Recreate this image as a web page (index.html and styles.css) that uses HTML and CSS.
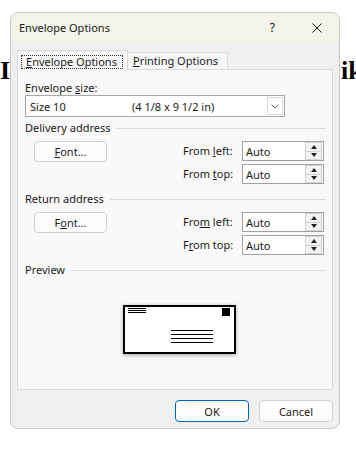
FILE: index.html
```html
<!DOCTYPE html>
<html lang="en">
<head>
    <meta charset="UTF-8">
    <meta name="viewport" content="width=device-width, initial-scale=1.0">
    <title>Envelope Options</title>
    <link rel="stylesheet" href="styles.css">
</head>
<body>
    <div class="page-text">
        <span>I</span>
        <span>ike to</span>
    </div>

    <div class="dialog">
        <div class="titlebar">
            <span class="title">Envelope Options</span>
            <span class="help">?</span>
            <svg class="close" width="10" height="10" viewBox="0 0 10 10">
                <path d="M0.5 0.5 L9.5 9.5 M9.5 0.5 L0.5 9.5" stroke="#1a1a1a" stroke-width="1" fill="none"/>
            </svg>
        </div>

        <div class="dialog-body">
            <div class="tabs">
                <div class="tab active"><span class="focus"><u>E</u>nvelope Options</span></div>
                <div class="tab"><u>P</u>rinting Options</div>
            </div>

            <div class="panel">
                <div class="field-label">Envelope <u>s</u>ize:</div>
                <div class="select">
                    <span class="size-name">Size 10</span>
                    <span>(4 1/8 x 9 1/2 in)</span>
                    <span class="select-arrow">
                        <svg width="8" height="5" viewBox="0 0 8 5">
                            <polyline points="0.5,0.5 4,4 7.5,0.5" stroke="#6b6b6b" stroke-width="1" fill="none"/>
                        </svg>
                    </span>
                </div>

                <div class="group-title first">Delivery address</div>
                <div class="address">
                    <button class="btn font-btn"><u>F</u>ont...</button>
                    <span class="pos-label">From <u>l</u>eft:</span>
                    <div class="spin">
                        <span>Auto</span>
                        <span class="spin-buttons"><span class="up"></span><span class="down"></span></span>
                    </div>
                    <span class="pos-label">From <u>t</u>op:</span>
                    <div class="spin">
                        <span>Auto</span>
                        <span class="spin-buttons"><span class="up"></span><span class="down"></span></span>
                    </div>
                </div>

                <div class="group-title">Return address</div>
                <div class="address">
                    <button class="btn font-btn">F<u>o</u>nt...</button>
                    <span class="pos-label">Fro<u>m</u> left:</span>
                    <div class="spin">
                        <span>Auto</span>
                        <span class="spin-buttons"><span class="up"></span><span class="down"></span></span>
                    </div>
                    <span class="pos-label">F<u>r</u>om top:</span>
                    <div class="spin">
                        <span>Auto</span>
                        <span class="spin-buttons"><span class="up"></span><span class="down"></span></span>
                    </div>
                </div>

                <div class="group-title">Preview</div>
                <div class="preview">
                    <svg class="envelope" width="113" height="49" viewBox="0 0 113 49">
                        <rect x="1" y="1" width="111" height="47" fill="#fff" stroke="#000" stroke-width="2"/>
                        <path d="M5 3.5 H23 M5 5.5 H23 M5 7.5 H23" stroke="#000" stroke-width="1"/>
                        <rect x="99" y="3" width="8" height="8" fill="#000"/>
                        <path d="M48 25.5 H90 M48 29.5 H90 M48 33.5 H90 M48 37.5 H90" stroke="#000" stroke-width="1.2"/>
                    </svg>
                </div>
            </div>

            <div class="footer">
                <button class="btn default">OK</button>
                <button class="btn">Cancel</button>
            </div>
        </div>
    </div>
</body>
</html>
```

FILE: styles.css
```css
body {
    margin: 0;
    height: 453px;
    overflow: hidden;
    position: relative;
    background: #fff;
    font-family: "Noto Sans", "Open Sans", sans-serif;
}

/* page text behind the dialog */
.page-text {
    display: grid;
    grid-template-columns: 341px auto;
    padding-top: 58px;
    font: bold 26px/26px "Liberation Serif", serif;
    white-space: nowrap;
    color: #000;
}

.dialog {
    position: absolute;
    left: 10px;
    top: 12px;
    width: 330px;
    height: 417px;
    box-sizing: border-box;
    border: 1px solid #c8c8c8;
    border-radius: 8px;
    overflow: hidden;
    background: #f0f0f0;
    display: flex;
    flex-direction: column;
    color: #1a1a1a;
    font-size: 11px;
}

.titlebar {
    flex: none;
    height: 29px;
    background: #f3f3e8;
    display: flex;
    align-items: center;
    padding: 0 17px 0 8px;
}
.help {
    margin-left: auto;
    font-size: 12px;
}
.close {
    margin-left: 37px;
}

.dialog-body {
    flex: 1;
    display: flex;
    flex-direction: column;
    padding: 8px 6px 6px 6px;
}

.tabs {
    display: flex;
    align-items: flex-end;
    height: 20px;
    margin-bottom: -1px;
    position: relative;
    z-index: 1;
}
.tab {
    box-sizing: border-box;
    width: 100px;
    height: 17px;
    margin-bottom: 1px;
    border: 1px solid #d9d9d9;
    border-bottom: none;
    background: #f7f7f7;
    padding-left: 5px;
    line-height: 15px;
}
.tab + .tab {
    border-left: none;
}
.tab.active {
    width: 111px;
    height: 20px;
    margin-bottom: 0;
    background: #f9f9f9;
    padding: 4px 0 0 3px;
}
.focus {
    display: block;
    box-sizing: border-box;
    width: 102px;
    height: 14px;
    border: 1px dotted #333;
    padding-left: 4px;
    line-height: 11px;
}

.panel {
    flex: 1;
    display: flex;
    flex-direction: column;
    border: 1px solid #d9d9d9;
    background: #f9f9f9;
    padding: 10px 6px 0 7px;
}

.field-label {
    line-height: 15px;
}

.select {
    box-sizing: border-box;
    width: 260px;
    height: 22px;
    border: 1px solid #a6a6a6;
    background: #fff;
    display: flex;
    align-items: center;
    padding-left: 4px;
}
.size-name {
    width: 102px;
}
.select-arrow {
    box-sizing: border-box;
    margin-left: auto;
    margin-right: 1px;
    width: 16px;
    height: 18px;
    border: 1px solid #dadada;
    display: flex;
    align-items: center;
    justify-content: center;
}

.group-title {
    display: flex;
    align-items: center;
    gap: 6px;
    line-height: 16px;
    margin-top: 7px;
}
.group-title.first {
    margin-top: 3px;
}
.group-title::after {
    content: "";
    flex: 1;
    height: 1px;
    background: #dcdcdc;
}

.address {
    margin-top: 5px;
    display: grid;
    grid-template-columns: 158px 59px 82px;
    grid-template-rows: 20px 20px;
    row-gap: 3px;
}
.pos-label {
    grid-column: 2;
    line-height: 20px;
}
.spin {
    grid-column: 3;
    box-sizing: border-box;
    border: 1px solid #a0a0a0;
    background: #fff;
    display: flex;
    align-items: center;
    padding-left: 3px;
}
.spin-buttons {
    margin-left: auto;
    margin-right: 1px;
    width: 15px;
    height: 16px;
    display: flex;
    flex-direction: column;
    border: 1px solid #d2d2d2;
    background: #f3f3f3;
}
.spin-buttons span {
    flex: 1;
    display: flex;
    align-items: center;
    justify-content: center;
}
.spin-buttons .up {
    border-bottom: 1px solid #d2d2d2;
}
.spin-buttons .up::before,
.spin-buttons .down::before {
    content: "";
    border-left: 3px solid transparent;
    border-right: 3px solid transparent;
}
.spin-buttons .up::before {
    border-bottom: 4px solid #222;
}
.spin-buttons .down::before {
    border-top: 4px solid #222;
}

.btn {
    box-sizing: border-box;
    border: 1px solid #d0d0d0;
    border-radius: 4px;
    background: #fdfdfd;
    font: inherit;
    color: inherit;
    padding: 0;
}
.font-btn {
    grid-row: 1;
    grid-column: 1;
    margin-left: 9px;
    width: 73px;
    height: 21px;
}

.preview {
    flex: 1;
}
.envelope {
    display: block;
    margin: 27px 0 0 98px;
    box-shadow: 0 1px 4px rgba(0, 0, 0, 0.35);
}

.footer {
    display: flex;
    justify-content: flex-end;
    gap: 10px;
    margin-top: 10px;
}
.footer .btn {
    width: 74px;
    height: 22px;
}
.btn.default {
    border-color: #0067c0;
}
```
